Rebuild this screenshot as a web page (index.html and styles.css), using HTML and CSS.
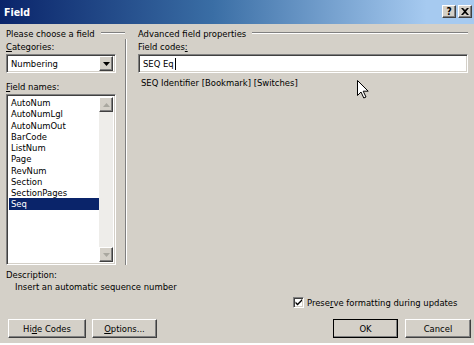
FILE: index.html
```html
<!DOCTYPE html>
<html lang="en">
<head>
    <meta charset="UTF-8">
    <title>Field</title>
    <link rel="stylesheet" href="styles.css">
</head>
<body>
    <div class="window">
        <div class="titlebar">
            <span class="title">Field</span>
            <div class="title-buttons">
                <span class="tbtn">?</span>
                <span class="tbtn">
                    <svg width="8" height="7" viewBox="0 0 8 7"><path d="M0 0h2l2 2 2-2h2L5 3.5 8 7H6L4 5 2 7H0l3-3.5z" fill="#000"/></svg>
                </span>
            </div>
        </div>

        <div class="content">
            <div class="panes">
                <div class="pane-left">
                    <div class="group-title"><span>Please choose a field</span><i class="rule"></i></div>
                    <div class="lbl"><u>C</u>ategories:</div>
                    <div class="combo sunken">
                        <span class="combo-value">Numbering</span>
                        <span class="arrow-btn raised">
                            <svg width="7" height="4" viewBox="0 0 7 4"><path d="M0 0h7L3.5 4z" fill="#000"/></svg>
                        </span>
                    </div>
                    <div class="lbl lbl-gap"><u>F</u>ield names:</div>
                    <div class="listbox sunken">
                        <ul class="items">
                            <li>AutoNum</li>
                            <li>AutoNumLgl</li>
                            <li>AutoNumOut</li>
                            <li>BarCode</li>
                            <li>ListNum</li>
                            <li>Page</li>
                            <li>RevNum</li>
                            <li>Section</li>
                            <li>SectionPages</li>
                            <li class="selected">Seq</li>
                        </ul>
                        <div class="scrollbar">
                            <span class="arrow-btn raised">
                                <svg width="7" height="4" viewBox="0 0 7 4"><path d="M0 4h7L3.5 0z" fill="#a9a79f"/></svg>
                            </span>
                            <span class="track"></span>
                            <span class="arrow-btn raised">
                                <svg width="7" height="4" viewBox="0 0 7 4"><path d="M0 0h7L3.5 4z" fill="#a9a79f"/></svg>
                            </span>
                        </div>
                    </div>
                </div>

                <div class="divider"></div>

                <div class="pane-right">
                    <div class="group-title"><span>Advanced field properties</span><i class="rule"></i></div>
                    <div class="lbl">Field codes<u>:</u></div>
                    <div class="textbox sunken">SEQ Eq<span class="caret"></span></div>
                    <p class="syntax">SEQ Identifier [Bookmark] [Switches]</p>
                </div>
            </div>

            <div class="description">
                <div>Description:</div>
                <div class="desc-text">Insert an automatic sequence number</div>
            </div>

            <div class="preserve">
                <span class="checkbox sunken">
                    <svg width="8" height="8" viewBox="0 0 8 8"><path d="M0.5 3.5l2 2L7 1v2L2.5 7.5.5 5.5z" fill="#000"/></svg>
                </span>
                <span>Prese<u>r</u>ve formatting during updates</span>
            </div>

            <div class="buttons">
                <button class="btn raised btn-hide">Hi<u>d</u>e Codes</button>
                <button class="btn raised btn-options"><u>O</u>ptions...</button>
                <button class="btn raised btn-default btn-ok">OK</button>
                <button class="btn raised btn-cancel">Cancel</button>
            </div>
        </div>

        <!-- mouse pointer sitting over the dialog -->
        <svg class="pointer" width="12" height="19" viewBox="0 0 12 19">
            <path d="M0.5 0.5v15l3.5-3.5 2.8 6 2.2-1-2.8-5.8h5z" fill="#fff" stroke="#000" stroke-width="1"/>
        </svg>
    </div>
</body>
</html>
```

FILE: styles.css
```css
body {
    margin: 0;
    padding: 0;
    background: #d4d0c8;
}

.window {
    position: relative;
    width: 474px;
    height: 345px;
    background: #d4d0c8;
    font-family: "DejaVu Sans Condensed", "DejaVu Sans", sans-serif;
    font-stretch: condensed;
    font-size: 9.4px;
    color: #000;
    overflow: hidden;
    box-sizing: border-box;
    border-bottom: 2px solid #fff;
}

.titlebar {
    height: 24px;
    display: flex;
    align-items: center;
    justify-content: space-between;
    padding: 0 2px 0 4px;
    background: linear-gradient(90deg, #0a246a 0%, #3a6ea5 45%, #a6caf0 90%);
}

.title {
    color: #fff;
    font-weight: bold;
    font-size: 10.5px;
}

.title-buttons {
    display: flex;
    gap: 2px;
    margin-top: -2px;
}

.tbtn {
    width: 14px;
    height: 13px;
    box-sizing: border-box;
    display: flex;
    align-items: center;
    justify-content: center;
    background: #d4d0c8;
    border: 1px solid;
    border-color: #fff #404040 #404040 #fff;
    box-shadow: inset -1px -1px #808080;
    font-weight: bold;
    font-size: 10px;
}

.content {
    padding: 3px 3px 0 6px;
}

.panes {
    display: flex;
    height: 238px;
}

.pane-left {
    width: 119px;
}

.pane-right {
    flex: 1;
    padding: 0 3px 0 11px;
}

.divider {
    width: 1px;
    margin-top: 12px;
    background: #808080;
    border-right: 1px solid #fff;
}

.group-title {
    display: flex;
    align-items: center;
    height: 12px;
}

.rule {
    flex: 1;
    height: 1px;
    margin-left: 6px;
    background: #808080;
    border-bottom: 1px solid #fff;
}

.lbl {
    height: 12px;
    line-height: 12px;
    margin-top: 2px;
}

.lbl-gap {
    margin-top: 8px;
}

.sunken {
    box-sizing: border-box;
    background: #fff;
    border: 1px solid;
    border-color: #808080 #fff #fff #808080;
    box-shadow: inset 1px 1px #404040, inset -1px -1px #d4d0c8;
}

.raised {
    box-sizing: border-box;
    background: #d4d0c8;
    border: 1px solid;
    border-color: #fff #404040 #404040 #fff;
    box-shadow: inset -1px -1px #808080;
}

.combo {
    width: 110px;
    height: 19px;
    margin-top: 1px;
    display: flex;
    align-items: center;
    padding: 2px;
}

.combo-value {
    flex: 1;
    padding-left: 2px;
}

.arrow-btn {
    width: 14px;
    height: 15px;
    display: flex;
    align-items: center;
    justify-content: center;
}

.listbox {
    width: 110px;
    height: 171px;
    margin-top: 1px;
    display: flex;
    padding: 2px;
}

.items {
    flex: 1;
    margin: 0;
    padding: 0;
    list-style: none;
}

.items li {
    height: 11.25px;
    line-height: 11.25px;
    padding-left: 2px;
}

.items .selected {
    background: #0a246a;
    color: #fff;
}

.scrollbar {
    width: 14px;
    display: flex;
    flex-direction: column;
}

.track {
    flex: 1;
    background: #eeedea;
}

.textbox {
    height: 19px;
    margin-top: 1px;
    display: flex;
    align-items: center;
    padding-left: 4px;
}

.caret {
    width: 1px;
    height: 12px;
    margin-left: 1px;
    background: #000;
}

.syntax {
    margin: 4px 0 0 3px;
    height: 12px;
    line-height: 12px;
}

.description {
    margin-top: 4px;
    line-height: 12px;
}

.desc-text {
    padding-left: 9px;
}

.preserve {
    display: flex;
    align-items: center;
    gap: 3px;
    height: 12px;
    margin-top: 3px;
    padding-left: 287px;
}

.checkbox {
    width: 11px;
    height: 11px;
    display: flex;
    align-items: center;
    justify-content: center;
}

.buttons {
    display: flex;
    margin-top: 11px;
    padding-left: 2px;
}

.btn {
    height: 19px;
    padding: 0;
    font: inherit;
    color: #000;
}

.btn-hide {
    width: 78px;
}

.btn-options {
    width: 65px;
    margin-left: 6px;
}

.btn-ok {
    width: 65px;
    margin-left: auto;
}

.btn-cancel {
    width: 66px;
    margin-left: 7px;
}

.btn-default {
    outline: 1px solid #000;
    outline-offset: -1px;
    border-color: #fff #404040 #404040 #fff;
}

.pointer {
    position: absolute;
    left: 357px;
    top: 80px;
}
```
